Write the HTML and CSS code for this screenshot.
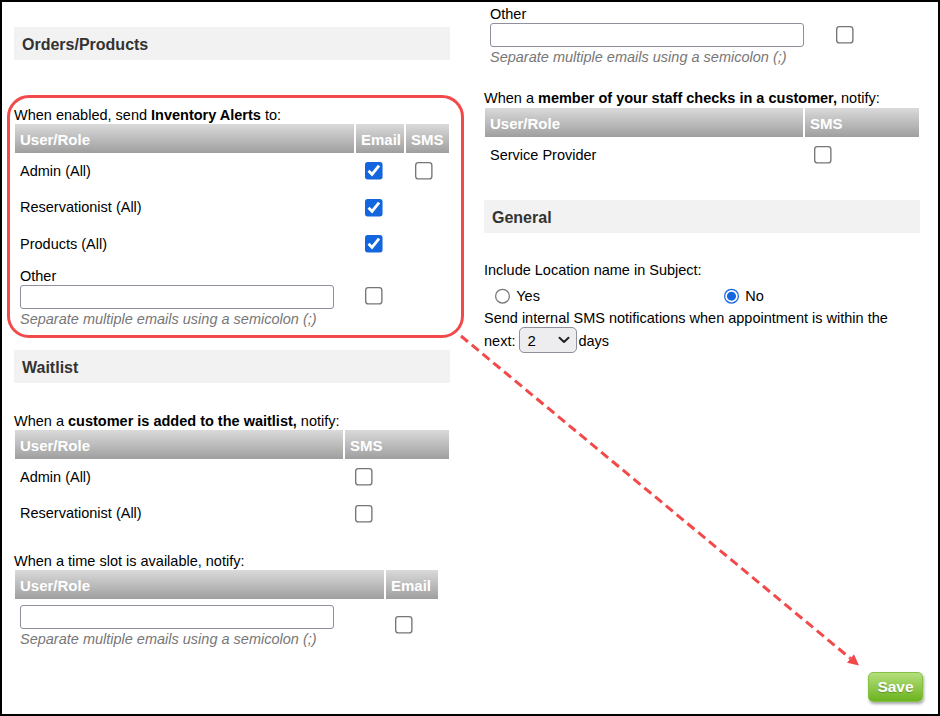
FILE: index.html
```html
<!DOCTYPE html>
<html lang="en">
<head>
<meta charset="utf-8">
<title>Notification settings</title>
<link rel="stylesheet" href="styles.css">
</head>
<body>
<div class="frame">
  <div class="columns">
    <div class="col col-left">
      <h2 class="section">Orders/Products</h2>
      <p class="intro intro-inv">When enabled, send <b>Inventory Alerts</b> to:</p>
      <div class="grid g-inv">
        <div class="th">User/Role</div>
        <div class="th">Email</div>
        <div class="th">SMS</div>

        <div class="td">Admin (All)</div>
        <div class="td cb"><input type="checkbox" checked></div>
        <div class="td cb"><input type="checkbox"></div>

        <div class="td">Reservationist (All)</div>
        <div class="td cb"><input type="checkbox" checked></div>
        <div class="td"></div>

        <div class="td">Products (All)</div>
        <div class="td cb"><input type="checkbox" checked></div>
        <div class="td"></div>

        <div class="td stack stack-inv">
          <div class="lbl">Other</div>
          <input class="email" type="text">
          <div class="hint">Separate multiple emails using a semicolon (;)</div>
        </div>
        <div class="td cb"><input type="checkbox"></div>
        <div class="td"></div>
      </div>

      <h2 class="section sec-wait">Waitlist</h2>
      <p class="intro intro-wait">When a <b>customer is added to the waitlist,</b> notify:</p>
      <div class="grid g-wait">
        <div class="th">User/Role</div>
        <div class="th">SMS</div>

        <div class="td">Admin (All)</div>
        <div class="td cb cb10"><input type="checkbox"></div>

        <div class="td">Reservationist (All)</div>
        <div class="td cb cb10"><input type="checkbox"></div>
      </div>

      <p class="intro intro-slot">When a time slot is available, notify:</p>
      <div class="grid g-slot">
        <div class="th">User/Role</div>
        <div class="th">Email</div>

        <div class="td stack stack-slot">
          <input class="email" type="text">
          <div class="hint">Separate multiple emails using a semicolon (;)</div>
        </div>
        <div class="td cb"><input type="checkbox"></div>
      </div>
    </div>

    <div class="col col-right">
      <div class="grid g-other">
        <div class="td stack stack-other">
          <div class="lbl">Other</div>
          <input class="email" type="text">
          <div class="hint">Separate multiple emails using a semicolon (;)</div>
        </div>
        <div class="td cb"><input type="checkbox"></div>
      </div>

      <p class="intro intro-staff">When a <b>member of your staff checks in a customer,</b> notify:</p>
      <div class="grid g-staff">
        <div class="th">User/Role</div>
        <div class="th">SMS</div>

        <div class="td">Service Provider</div>
        <div class="td cb"><input type="checkbox"></div>
      </div>

      <h2 class="section sec-general">General</h2>
      <p class="intro intro-loc">Include Location name in Subject:</p>
      <div class="radios">
        <label class="radio-opt"><input type="radio" name="loc">Yes</label>
        <label class="radio-opt"><input type="radio" name="loc" checked>No</label>
      </div>
      <p class="intro intro-sms">Send internal SMS notifications when appointment is within the next: <span class="select-wrap"><select class="days"><option>1</option><option selected>2</option><option>3</option></select><svg class="chev" width="12" height="8" viewBox="0 0 12 8"><path d="M1.5 1.8 L6 6 L10.5 1.8" fill="none" stroke="#222" stroke-width="2" stroke-linecap="round" stroke-linejoin="round"/></svg></span><span class="unit">days</span></p>
    </div>
  </div>

  <div class="footer">
    <button class="save" type="button">Save</button>
  </div>

  <div class="callout"></div>
  <svg class="arrow" width="940" height="716" viewBox="0 0 940 716">
    <line x1="461" y1="336" x2="850.5" y2="658.5" stroke="#f24a4a" stroke-width="3" stroke-dasharray="9 5"/>
    <polygon points="859,665.5 847,662.7 854,654.3" fill="#f24a4a"/>
  </svg>
</div>
</body>
</html>
```

FILE: styles.css
```css
* { box-sizing: border-box; }

html, body {
  margin: 0;
  padding: 0;
  background: #fff;
}

body {
  font-family: "Liberation Sans", Arial, sans-serif;
  font-size: 14.5px;
  line-height: 17px;
  color: #000;
}

.frame {
  position: relative;
  width: 940px;
  height: 716px;
  border: 2px solid #000;
  display: flex;
  flex-direction: column;
  overflow: hidden;
}

.columns {
  display: flex;
  gap: 34px;
  padding: 0 18px 0 12px;
}

.col {
  width: 436px;
  flex: none;
}

.col-left { padding-top: 25px; }

.section {
  margin: 0;
  height: 33px;
  padding: 2px 0 0 8px;
  line-height: 31px;
  background: #f2f2f2;
  color: #333;
  font-size: 16px;
  font-weight: bold;
  overflow: hidden;
}

.intro { margin: 0; }
.intro b { font-weight: bold; }

.intro-inv { margin-top: 47px; }
.sec-wait { margin-top: 20px; }
.intro-wait { margin-top: 30px; }
.intro-slot { margin-top: 20.5px; }

.intro-staff { margin-top: 22.5px; margin-bottom: 1px; }
.sec-general { margin-top: 26.5px; }
.intro-loc { margin-top: 29px; }
.intro-sms { max-width: 425px; }

.grid {
  display: grid;
  column-gap: 2px;
  margin-left: 1px;
}

.g-inv { grid-template-columns: 339px 48px 43px; }
.g-wait { grid-template-columns: 328px 104px; }
.g-slot { grid-template-columns: 369px 52px; }
.g-other { grid-template-columns: 340px 94px; }
.g-staff { grid-template-columns: 318px 114px; }

.th {
  height: 29px;
  padding: 3px 5px 0;
  line-height: 26px;
  font-size: 15px;
  font-weight: bold;
  color: #fff;
  background: linear-gradient(#dadada, #9f9f9f);
  white-space: nowrap;
}

.td {
  min-height: 36.5px;
  display: flex;
  align-items: center;
  padding-left: 5px;
}

.td.cb { padding-left: 9px; }
.td.cb10 { padding-left: 10px; }

.td.stack { display: block; }
.stack-inv { padding: 5px 0 2.5px 5px; }
.stack-other { padding: 4px 0 1.5px 5px; }
.stack-slot { padding: 6px 0 4.5px 5px; }

.lbl { display: block; }

.email {
  display: block;
  width: 314px;
  height: 24px;
  margin: 0;
  padding: 0 4px;
  border: 1px solid #8f8f9d;
  border-radius: 3px;
  background: #fff;
  font: inherit;
}

.hint {
  margin-top: 2px;
  color: #777;
  font-style: italic;
  white-space: nowrap;
}

input[type="checkbox"] {
  zoom: 1.35;
  margin: 0;
  accent-color: #1466de;
}

.radios {
  display: grid;
  grid-template-columns: 229px 1fr;
  height: 31px;
  padding-top: 4px;
}

.radio-opt {
  display: flex;
  align-items: center;
  padding-left: 11px;
}

input[type="radio"] {
  zoom: 1.25;
  margin: 0 4px 0 0;
  accent-color: #1466de;
}

.select-wrap {
  position: relative;
  display: inline-block;
  margin-right: 1px;
}

.days {
  -webkit-appearance: none;
  appearance: none;
  width: 58px;
  height: 26px;
  margin: 0;
  padding: 0 0 0 7px;
  border: 1px solid #8f8f9d;
  border-radius: 5px;
  background: #ededf0;
  color: #000;
  font: inherit;
  font-size: 15px;
}

.chev {
  position: absolute;
  right: 7px;
  top: 9px;
  pointer-events: none;
}

.footer {
  margin-top: auto;
  display: flex;
  justify-content: flex-end;
  padding: 0 15px 12px 0;
}

.save {
  width: 55px;
  height: 30px;
  padding: 0;
  border: 1px solid #86c046;
  border-radius: 5px;
  background: linear-gradient(#b4df7c, #6cb31e);
  box-shadow: 1px 2px 3px rgba(0, 0, 0, 0.35);
  color: #fff;
  font-family: "Liberation Sans", Arial, sans-serif;
  font-size: 15.5px;
  font-weight: bold;
  text-shadow: 0 1px 1px rgba(0, 0, 0, 0.25);
}

.callout {
  position: absolute;
  left: 5px;
  top: 93px;
  width: 457px;
  height: 243px;
  border: 3px solid #f24a4a;
  border-radius: 22px;
  pointer-events: none;
}

.arrow {
  position: absolute;
  left: -2px;
  top: -2px;
  pointer-events: none;
}
```
